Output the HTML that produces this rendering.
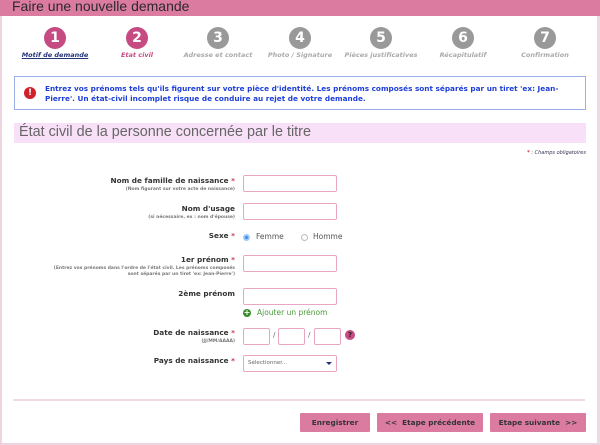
<!DOCTYPE html>
<html><head><meta charset="utf-8"><style>
*{margin:0;padding:0;box-sizing:border-box}
body{width:600px;height:445px;background:#fff;position:relative;overflow:hidden;font-family:"DejaVu Sans","Liberation Sans",sans-serif}
.a{position:absolute}
.hdr{left:0;top:0;width:600px;height:16px;background:#dc7ba0}
.hdr span{position:absolute;left:12px;top:-2px;font:14px "Liberation Sans",sans-serif;color:#2a2a2a}
.frame{left:0;top:16px;width:600px;height:429px;border-left:2px solid #eed3e1;border-right:3px solid #e8dde3;border-bottom:2px solid #eed3e1}
.c{width:22px;height:22px;border-radius:50%;background:#999;color:#fff;font-weight:bold;font-size:14px;text-align:center;line-height:22px;top:27px}
.c.p{background:#c54b82}
.sl{top:51px;width:100px;text-align:center;font-size:6.5px;font-style:italic;font-weight:bold;color:#aaa}
.alert{left:14px;top:76px;width:572px;height:34px;border:1px solid #9aaee8;background:#fff}
.alert .t{position:absolute;left:30px;top:7px;width:530px;font-size:7.3px;font-weight:bold;color:#1d3ed8;line-height:9.5px}
.ic{left:9px;top:10px;width:12px;height:12px;border-radius:50%;background:#d0202a;color:#fff;font-size:9px;font-weight:bold;text-align:center;line-height:12px}
.sec{left:14px;top:123px;width:572px;height:20px;background:#f8e0f8}
.sec span{position:absolute;left:5px;top:1px;font:14.4px "Liberation Sans",sans-serif;color:#666}
.lab{right:365px;text-align:right;font-size:7.3px;font-weight:bold;color:#333}
.lab b{color:#d0304a}
.sub{right:365px;text-align:right;font-size:4.5px;font-weight:bold;color:#777;line-height:6px}
.in{left:243px;width:94px;height:17px;border:1px solid #e8a6c2;border-radius:2px}
.btn{top:413px;height:19px;background:#dc7ba0;color:#333;font-size:7.3px;font-weight:bold;text-align:center;line-height:19px;border-radius:1px}
</style></head><body>
<div class="a hdr"><span>Faire une nouvelle demande</span></div>
<div class="a frame"></div>
<div class="a c p" style="left:44px">1</div>
<div class="a c p" style="left:126px">2</div>
<div class="a c" style="left:207px">3</div>
<div class="a c" style="left:289px">4</div>
<div class="a c" style="left:370px">5</div>
<div class="a c" style="left:452px">6</div>
<div class="a c" style="left:534px">7</div>
<div class="a sl" style="left:5px;color:#223377;text-decoration:underline">Motif de demande</div>
<div class="a sl" style="left:87px;color:#c54b82">Etat civil</div>
<div class="a sl" style="left:168px">Adresse et contact</div>
<div class="a sl" style="left:250px">Photo / Signature</div>
<div class="a sl" style="left:331px">Pièces justificatives</div>
<div class="a sl" style="left:413px">Récapitulatif</div>
<div class="a sl" style="left:495px">Confirmation</div>
<div class="a alert"><div class="a ic">!</div><div class="t">Entrez vos prénoms tels qu'ils figurent sur votre pièce d'identité. Les prénoms composés sont séparés par un tiret 'ex: Jean-Pierre'. Un état-civil incomplet risque de conduire au rejet de votre demande.</div></div>
<div class="a sec"><span>État civil de la personne concernée par le titre</span></div>
<div class="a" style="right:14px;top:150px;font-size:5px;font-style:italic;color:#335"><b style="color:#d0304a">*</b> : Champs obligatoires</div>

<div class="a lab" style="top:176px">Nom de famille de naissance <b>*</b></div>
<div class="a sub" style="top:187px">(Nom figurant sur votre acte de naissance)</div>
<div class="a in" style="top:175px"></div>
<div class="a lab" style="top:204px">Nom d'usage</div>
<div class="a sub" style="top:215px">(si nécessaire, ex : nom d'épouse)</div>
<div class="a in" style="top:203px"></div>
<div class="a lab" style="top:231px">Sexe <b>*</b></div>
<div class="a" style="left:243px;top:234px;width:7px;height:7px;border-radius:50%;background:#3a8ef0;border:2px solid #9cc8f8"></div>
<div class="a" style="left:256px;top:232px;font-size:7.5px;color:#555">Femme</div>
<div class="a" style="left:301px;top:234px;width:7px;height:7px;border-radius:50%;border:1px solid #bbb"></div>
<div class="a" style="left:313px;top:232px;font-size:7.5px;color:#555">Homme</div>
<div class="a lab" style="top:255px">1er prénom <b>*</b></div>
<div class="a sub" style="top:266px">(Entrez vos prénoms dans l'ordre de l'état civil. Les prénoms composés<br>sont séparés par un tiret 'ex: Jean-Pierre')</div>
<div class="a in" style="top:255px"></div>
<div class="a lab" style="top:289px">2ème prénom</div>
<div class="a in" style="top:288px"></div>
<div class="a" style="left:243px;top:309px;width:8px;height:8px;border-radius:50%;background:#3a8a2a;color:#fff;font-size:8px;line-height:8px;text-align:center;font-weight:bold">+</div>
<div class="a" style="left:257px;top:308px;font-size:7.5px;color:#4a9a3a">Ajouter un prénom</div>
<div class="a lab" style="top:328px">Date de naissance <b>*</b></div>
<div class="a sub" style="top:339px">(JJ/MM/AAAA)</div>
<div class="a in" style="top:328px;width:27px"></div>
<div class="a" style="left:273px;top:331px;font-size:7px;color:#666">/</div>
<div class="a in" style="top:328px;left:278px;width:27px"></div>
<div class="a" style="left:308px;top:331px;font-size:7px;color:#666">/</div>
<div class="a in" style="top:328px;left:314px;width:27px"></div>
<div class="a" style="left:345px;top:330px;width:10px;height:10px;border-radius:50%;background:#c54b82;color:#222;font-size:7px;font-weight:bold;line-height:10px;text-align:center">?</div>
<div class="a lab" style="top:356px">Pays de naissance <b>*</b></div>
<div class="a in" style="top:355px"><span style="position:absolute;left:4px;top:4px;font-size:5.5px;color:#666">Sélectionner...</span><span style="position:absolute;right:4px;top:6px;border-left:3px solid transparent;border-right:3px solid transparent;border-top:3px solid #223377"></span></div>
<div class="a" style="left:13px;top:399px;width:572px;height:2px;background:#f0d8e4"></div>
<div class="a btn" style="left:300px;width:70px">Enregistrer</div>
<div class="a btn" style="left:377px;width:106px">&lt;&lt;&nbsp; Etape précédente</div>
<div class="a btn" style="left:490px;width:96px">Etape suivante &nbsp;&gt;&gt;</div>
</body></html>
